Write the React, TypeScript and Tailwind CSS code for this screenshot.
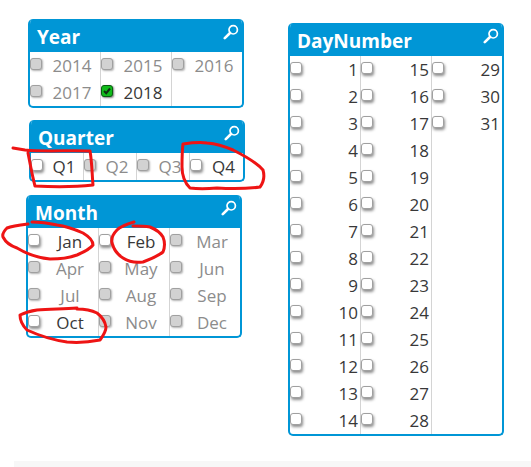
import React from 'react';

type Item = { label: string; on?: boolean; checked?: boolean };

const Magnifier = () => (
  <svg width="16" height="16" viewBox="0 0 16 16" className="absolute right-[5px] top-[5px]" fill="none" stroke="white">
    <circle cx="10.2" cy="5.8" r="4.2" strokeWidth="1.7" />
    <path d="M7 9 L1.8 14.2" strokeWidth="2.6" strokeLinecap="round" />
  </svg>
);

const Check = ({ item }: { item: Item }) => {
  if (item.checked) {
    return (
      <span className="mb-[4px] flex h-3 w-3 shrink-0 items-center justify-center rounded-[3px] border border-[#0a5c10] bg-[#10bb1a] shadow-[1px_1px_2px_rgba(0,0,0,0.5)]">
        <svg width="8" height="8" viewBox="0 0 8 8" fill="none" stroke="#0f2f10" strokeWidth="2">
          <path d="M1 4 L3.2 6.2 L7 1.5" />
        </svg>
      </span>
    );
  }
  return (
    <span
      className={
        item.on
          ? 'mb-[4px] h-3 w-3 shrink-0 rounded-[3px] border border-[#a0a0a0] bg-white shadow-[1px_2px_3px_rgba(0,0,0,0.45)]'
          : 'mb-[4px] h-3 w-3 shrink-0 rounded-[3px] border-[1.5px] border-[#a0a0a0] bg-[#d2d2d2] shadow-[1px_1px_2px_rgba(0,0,0,0.3)]'
      }
    />
  );
};

const Cell = ({ item, right, rowH }: { item: Item; right?: boolean; rowH: string }) => (
  <div className={`flex items-center ${rowH}`}>
    <Check item={item} />
    <span
      className={`flex-1 pb-[1px] text-[17px] leading-none ${right ? 'pr-[2px] text-right' : 'pl-[2px] text-center'} ${
        item.on || item.checked ? 'text-[#383838]' : 'text-[#8c8c8c]'
      }`}
    >
      {item.label}
    </span>
  </div>
);

const Listbox = ({
  title,
  columns,
  className,
  cols,
  right,
}: {
  title: string;
  columns: Item[][];
  className: string;
  cols: string;
  right?: boolean;
}) => (
  <div className={`absolute flex flex-col overflow-hidden rounded-[5px] border-2 border-t-0 border-[#0096d6] bg-white ${className}`}>
    <div className="relative -mx-[2px] h-[33px] shrink-0 bg-[#0096d6] pl-[9px] pt-[5px] text-[19px] font-bold leading-[27px] text-white">
      {title}
      <Magnifier />
    </div>
    <div className={`grid flex-1 ${cols}`}>
      {columns.map((col, i) => (
        <div key={i} className={`flex flex-col ${i < columns.length - 1 ? 'border-r border-[#d4d4d4]' : ''}`}>
          {col.map((item) => (
            <Cell key={item.label} item={item} right={right} rowH="h-[27px]" />
          ))}
        </div>
      ))}
    </div>
  </div>
);

const grey = (labels: string[], on: string[] = []): Item[] => labels.map((label) => ({ label, on: on.includes(label) }));
const days = (from: number, to: number): Item[] => {
  const out: Item[] = [];
  for (let d = from; d <= to; d++) out.push({ label: String(d), on: true });
  return out;
};

const App: React.FC = () => (
  <div className="relative flex h-[467px] w-[531px] flex-col justify-end overflow-hidden bg-white font-['Open_Sans',sans-serif]">
    {/* listboxes sit on a free canvas, like objects on a QlikView sheet */}
    <Listbox
      title="Year"
      className="left-[28px] top-[19px] h-[89px] w-[216px]"
      cols="grid-cols-[71px_71px_1fr]"
      columns={[
        grey(['2014', '2017']),
        [{ label: '2015' }, { label: '2018', checked: true }],
        grey(['2016']),
      ]}
    />
    <Listbox
      title="Quarter"
      className="left-[29px] top-[120px] h-[62px] w-[216px]"
      cols="grid-cols-[53px_53px_53px_1fr]"
      columns={[grey(['Q1'], ['Q1']), grey(['Q2']), grey(['Q3']), grey(['Q4'], ['Q4'])]}
    />
    <Listbox
      title="Month"
      className="left-[26px] top-[195px] h-[143px] w-[216px]"
      cols="grid-cols-[71px_71px_1fr]"
      columns={[
        grey(['Jan', 'Apr', 'Jul', 'Oct'], ['Jan', 'Oct']),
        grey(['Feb', 'May', 'Aug', 'Nov'], ['Feb']),
        grey(['Mar', 'Jun', 'Sep', 'Dec']),
      ]}
    />
    <Listbox
      title="DayNumber"
      right
      className="left-[288px] top-[23px] h-[413px] w-[216px]"
      cols="grid-cols-[71px_71px_1fr]"
      columns={[days(1, 14), days(15, 28), days(29, 31)]}
    />

    {/* red pen marks on top of the listboxes */}
    <svg width="531" height="467" className="pointer-events-none absolute left-0 top-0" fill="none" stroke="#ee1414" strokeWidth="3" strokeLinecap="round" strokeLinejoin="round">
      <path d="M13 148 L25 150 C45 152 70 150 90 151 C92 162 92 174 93 185 C75 187 55 187 35 186 C32 175 30 163 28 153" />
      <path d="M183 144 C190 143 200 142 207 143 C218 144 226 147 233 150 C245 156 256 162 263 170 C265 177 263 183 260 187 C245 189 232 189 217 188 C207 189 197 189 190 188 C184 182 182 175 182 167 C182 158 182 151 183 144" />
      <path d="M28 224 C20 225 12 226 7 228 C4 231 2 234 3 237 C6 243 11 246 17 248 C27 254 38 258 50 259 C60 259 69 258 77 255 C84 252 90 249 93 245 C93 240 88 236 83 233 C74 229 65 226 57 225 C48 223 40 222 32 222" />
      <path d="M134 222 C127 224 121 226 117 230 C113 234 111 238 112 243 C114 250 118 255 123 258 C129 262 136 263 143 262 C151 259 158 256 163 252 C165 247 165 242 163 237 C160 232 155 229 150 227 C144 226 139 226 133 226" />
      <path d="M77 308 C63 309 50 309 37 310 C30 311 24 313 20 315 C20 321 23 326 27 330 C40 336 53 340 67 342 C78 343 90 342 100 340 C103 336 106 332 106 327 C105 321 101 316 97 313 C91 310 84 309 77 309" />
    </svg>

    <div className="ml-[14px] h-[6px] bg-[#f7f7f7]" />
  </div>
);

export default App;
